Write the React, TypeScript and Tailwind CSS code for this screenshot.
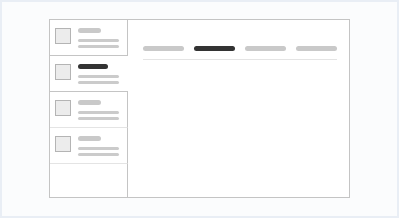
import React from 'react'

interface ItemProps {
  active?: boolean
  titleWidth: string
  separator: string
}

function ListItem({ active, titleWidth, separator }: ItemProps) {
  return (
    <div
      className={`flex h-[36px] items-start gap-[7px] border-b pl-[5px] pt-[8px] ${separator} ${
        active ? 'w-[78px]' : 'w-[78px] border-r border-r-[#c4c4c4]'
      }`}
    >
      <div className="h-[16px] w-[16px] shrink-0 border border-[#b4b4b4] bg-[#ececec]" />
      <div className="flex flex-col">
        <div
          className={`h-[5px] rounded-full ${titleWidth} ${active ? 'bg-[#333333]' : 'bg-[#c9c9c9]'}`}
        />
        <div className="mt-[6px] h-[3px] w-[41px] rounded-full bg-[#cbcbcb]" />
        <div className="mt-[3px] h-[3px] w-[41px] rounded-full bg-[#cbcbcb]" />
      </div>
    </div>
  )
}

export default function App() {
  const tabs = [false, true, false, false]

  return (
    <div className="box-border h-[218px] w-[399px] border-2 border-[#e9eef5] bg-[#fbfcfd] pl-[47px] pt-[17px]">
      <div className="flex h-[179px] w-[301px] border border-[#c4c4c4] bg-white">
        {/* list */}
        <div className="flex w-[78px] shrink-0 flex-col">
          <ListItem titleWidth="w-[23px]" separator="border-b-[#c4c4c4]" />
          <ListItem active titleWidth="w-[30px]" separator="border-b-[#c4c4c4]" />
          <ListItem titleWidth="w-[23px]" separator="border-b-[#e4e4e4]" />
          <ListItem titleWidth="w-[23px]" separator="border-b-[#e4e4e4]" />
          <div className="flex-1 border-r border-r-[#c4c4c4]" />
        </div>

        {/* content */}
        <div className="flex-1 pl-[15px] pr-[12px] pt-[26px]">
          <div className="flex gap-[10px]">
            {tabs.map((on, i) => (
              <div
                key={i}
                className={`h-[5px] w-[41px] rounded-full ${on ? 'bg-[#333333]' : 'bg-[#c9c9c9]'}`}
              />
            ))}
          </div>
          <div className="mt-[8px] h-px w-[194px] bg-[#e4e4e4]" />
        </div>
      </div>
    </div>
  )
}
